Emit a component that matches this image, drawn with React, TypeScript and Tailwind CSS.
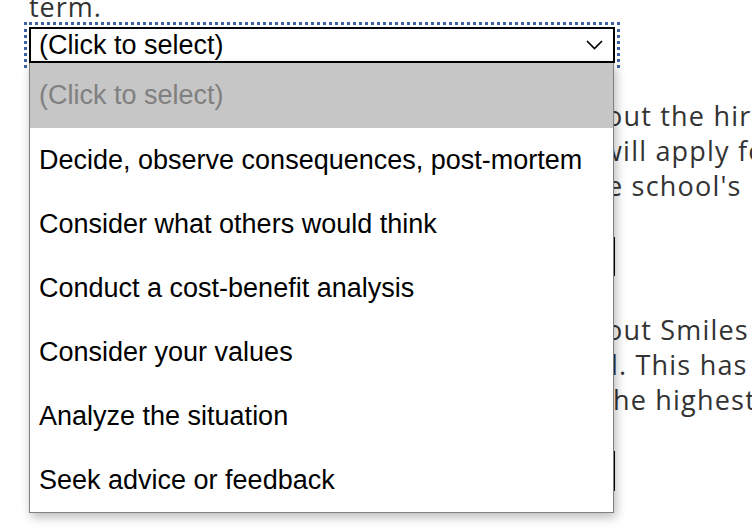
const options = [
  "Decide, observe consequences, post-mortem",
  "Consider what others would think",
  "Conduct a cost-benefit analysis",
  "Consider your values",
  "Analyze the situation",
  "Seek advice or feedback",
];

// lines of the page text that peek out right of the open list
const firstParagraph = [
  { pad: "pl-[577px]", text: "out the hiring process at" },
  { pad: "pl-[572px]", text: "will apply for the role" },
  { pad: "pl-[578px]", text: "e school's" },
];

const secondParagraph = [
  { pad: "pl-[577px]", text: "out Smiles Dental" },
  { pad: "pl-[582px]", text: "l. This has been" },
  { pad: "pl-[584px]", text: "he highest" },
];

function Chevron() {
  return (
    <svg width="17" height="10" viewBox="0 0 17 10" fill="none">
      <path d="M1 1L8.5 8.5L16 1" stroke="#000" strokeWidth="1.7" />
    </svg>
  );
}

function SelectBox({ focused = false }: { focused?: boolean }) {
  return (
    <div
      className={`flex h-[36px] w-[586px] items-center justify-between border-2 border-black bg-white pl-[8px] pr-[10px] ${
        focused ? "outline-[3px] outline-offset-[2px] outline-dotted outline-[#3e62a0]" : ""
      }`}
    >
      <span className="font-['Liberation_Sans',Arial,sans-serif] text-[27px] leading-none text-black">
        (Click to select)
      </span>
      <Chevron />
    </div>
  );
}

function Paragraph({ lines }: { lines: { pad: string; text: string }[] }) {
  return (
    <div className="text-[27px] leading-[35px] tracking-[1.2px] text-[#333]">
      {lines.map((line) => (
        <div key={line.text} className={`whitespace-nowrap ${line.pad}`}>
          {line.text}
        </div>
      ))}
    </div>
  );
}

export default function App() {
  return (
    <div className="relative h-[530px] w-[752px] overflow-hidden bg-white font-['Open_Sans',sans-serif]">
      <div className="pl-[29px]">
        <p className="-mt-[10px] text-[27px] leading-[34px] tracking-[1px] text-[#333]">
          term.
        </p>

        <div className="relative z-10 mt-[3px] w-[586px]">
          <SelectBox focused />

          <ul className="absolute left-0 top-full w-[585px] border border-t-0 border-[#808080] bg-white font-['Liberation_Sans',Arial,sans-serif] text-[27px] leading-none shadow-[2px_4px_10px_rgba(0,0,0,0.28)]">
            <li className="flex h-[65px] items-center bg-[#c6c6c6] pl-[9px] text-[#808080]">
              (Click to select)
            </li>
            {options.map((option) => (
              <li key={option} className="flex h-[64px] items-center pl-[9px] text-black">
                {option}
              </li>
            ))}
          </ul>
        </div>

        <div className="mt-[35px]">
          <Paragraph lines={firstParagraph} />
        </div>

        <div className="mt-[34px]">
          <div className="h-[39px] w-[586px] border-2 border-black" />
        </div>

        <div className="mt-[36px]">
          <Paragraph lines={secondParagraph} />
        </div>

        <div className="mt-[34px]">
          <div className="h-[40px] w-[586px] border-2 border-black" />
        </div>
      </div>
    </div>
  );
}
